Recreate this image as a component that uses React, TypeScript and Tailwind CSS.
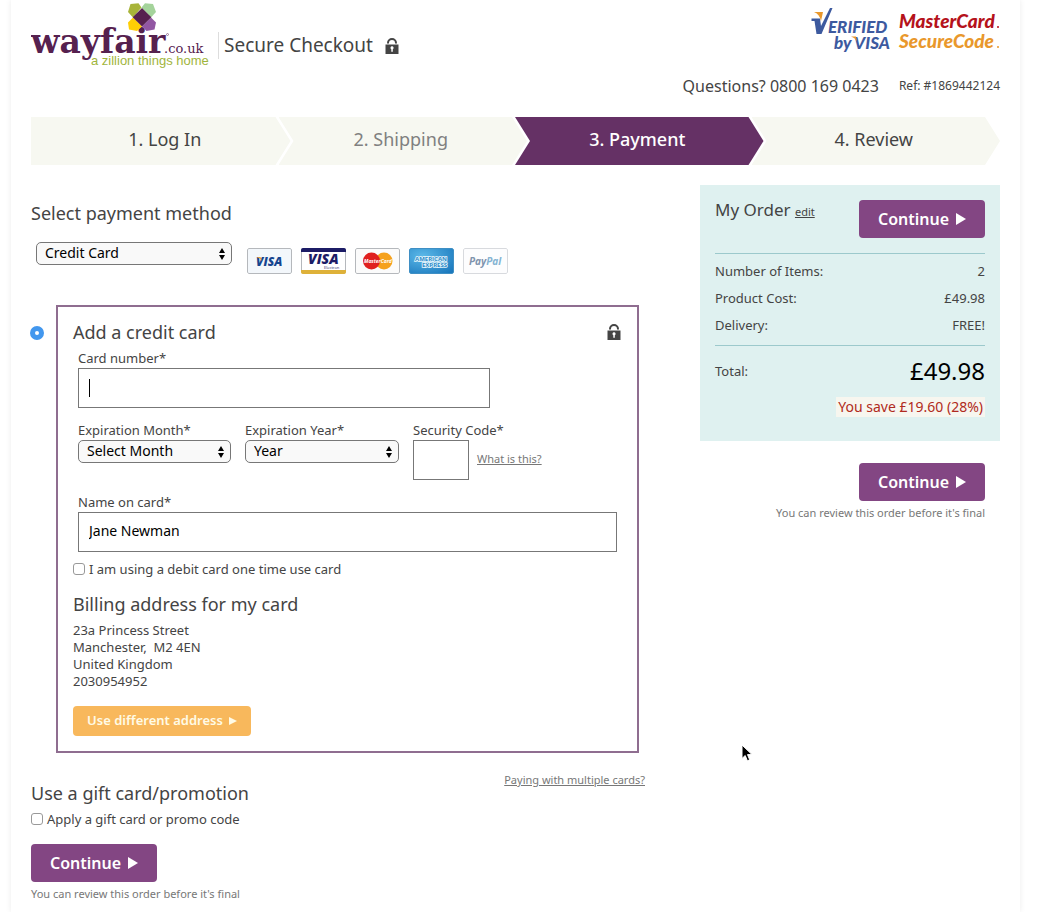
import type { ReactNode } from 'react';
import clsx from 'clsx';

// ============================================================
// Icons and logos
// ============================================================

function LockIcon({ className }: { className?: string }) {
  return (
    <svg viewBox="0 0 14 16" className={clsx('w-3.5 h-4 flex-shrink-0', className)} aria-hidden="true">
      <path d="M3 5.500V5a4 4 0 0 1 8 0v.5" fill="none" stroke="#444" strokeWidth="2" />
      <path fill="#444" d="M.5 6.500h13V16H.5z" />
      <path fill="#fff" d="M7 8.200a1.600 1.600 0 0 1 .8 3v2.600H6.300v-2.600A1.600 1.600 0 0 1 7 8.200z" />
    </svg>
  );
}

function WayfairLogo() {
  return (
    <svg viewBox="0 0 180 72" className="w-[180px] h-[72px] flex-shrink-0" role="img" aria-label="Wayfair.co.uk">
      <text x="0" y="53" fill="#56214f" fontFamily="'DejaVu Serif', serif" fontWeight="700" fontSize="33">
        wayfair
      </text>
      <path fill="#a8b43a" d="M110.500 7.500 107.500 3.300 99.500 4 97 12 102 17.500z" />
      <path fill="#a4d39b" d="M110.500 7.500 114 3.300 122 4 125 12 120 17.500z" />
      <path fill="#ffcf05" d="M102 17.500 97 22.500 98 29.500 106 31 111 26.500z" />
      <path fill="#9257a3" d="M120 17.500 125 22.500 123.500 29.500 115.500 31 111 26.500z" />
      <path fill="#56214f" d="M111 8 120.300 17.300 111 26.600 101.700 17.300z" />
      <text x="133" y="53" fill="#56214f" fontFamily="'DejaVu Serif', serif" fontSize="13">
        .co.uk
      </text>
      <text x="60" y="65" fill="#9fb53c" fontFamily="'Liberation Sans', sans-serif" fontSize="13">
        a zillion things home
      </text>
      <circle cx="136.500" cy="34.500" r="1" fill="none" stroke="#56214f" strokeWidth=".5" />
    </svg>
  );
}

function SecurityLogos() {
  return (
    <svg viewBox="0 0 190 44" className="w-[190px] h-11" role="img" aria-label="Verified by Visa, MasterCard SecureCode">
      <g fontFamily="Lato, sans-serif" fontWeight="900" fontStyle="italic">
        <path fill="#e9982c" d="M4 4H13L11 13Q9.500 6 4 4z" />
        <path fill="#3d5a9f" d="M1.500 10.500H10L11 18 20 0H22.500L11.500 26H6.500L4.500 13H1.500z" />
        <text x="18" y="25" fill="#3d5a9f" fontSize="17">ERIFIED</text>
        <text x="24" y="41" fill="#3d5a9f" fontSize="17">by VISA</text>
        <path fill="#e9982c" d="M41 28.500h5l1 5Q45.500 30 41 28.500z" />
        <text x="89" y="20" fill="#b5121b" fontSize="19">MasterCard</text>
        <text x="89" y="40" fill="#e9982c" fontSize="19">SecureCode</text>
        <circle cx="188" cy="19" r="1" fill="#b5121b" />
        <circle cx="188" cy="39" r="1" fill="#e9982c" />
      </g>
    </svg>
  );
}

function CardLogos() {
  const sans = "'Open Sans', sans-serif";
  const frame = 'w-[45px] h-[26px] rounded-xs';
  return (
    <div className="flex gap-[9px] mt-1.5">
      <svg viewBox="0 0 45 26" className={frame} role="img" aria-label="Visa">
        <rect x=".5" y=".5" width="44" height="25" rx="1.500" fill="#f3f7fb" stroke="#b5b8bc" />
        <text x="9" y="18" fill="#16458f" fontFamily={sans} fontWeight="800" fontStyle="italic" fontSize="12">VISA</text>
        <path fill="#eaa53a" d="M9.500 9h4l1.500 4Q13 10 9.500 9z" />
      </svg>
      <svg viewBox="0 0 45 26" className={frame} role="img" aria-label="Visa Electron">
        <rect x=".5" y=".5" width="44" height="25" rx="1.500" fill="#fff" stroke="#b5b8bc" />
        <path fill="#1c1c66" d="M0 0h45v4H0z" />
        <path fill="#deb139" d="M0 22h45v4H0z" />
        <text x="7" y="16" fill="#1c1c66" fontFamily={sans} fontWeight="800" fontStyle="italic" fontSize="14">VISA</text>
        <text x="23" y="21" fill="#1c1c66" fontFamily={sans} fontSize="4">Electron</text>
      </svg>
      <svg viewBox="0 0 45 26" className={frame} role="img" aria-label="MasterCard">
        <rect x=".5" y=".5" width="44" height="25" rx="1.500" fill="#fbfbfb" stroke="#b5b8bc" />
        <circle cx="29" cy="13" r="8.500" fill="#f5a11c" />
        <circle cx="16.500" cy="13" r="8.500" fill="#e0201f" />
        <text x="9" y="15" fill="#fff" fontFamily={sans} fontWeight="700" fontStyle="italic" fontSize="5">MasterCard</text>
      </svg>
      <svg viewBox="0 0 45 26" className={frame} role="img" aria-label="American Express">
        <defs>
          <radialGradient id="amex" cx=".3" cy=".3" r=".9">
            <stop offset="0" stopColor="#5bb8e8" />
            <stop offset="1" stopColor="#1a78bd" />
          </radialGradient>
        </defs>
        <rect x=".5" y=".5" width="44" height="25" rx="1.500" fill="url(#amex)" stroke="#3f8fc4" />
        <g fill="#2b8bc9" stroke="#e6f5fc" strokeWidth="1.600" paintOrder="stroke" fontFamily={sans} fontWeight="700" fontSize="6">
          <text x="6" y="13">AMERICAN</text>
          <text x="13" y="19">EXPRESS</text>
        </g>
      </svg>
      <svg viewBox="0 0 45 26" className={frame} role="img" aria-label="PayPal">
        <rect x=".5" y=".5" width="44" height="25" rx="1.500" fill="#fdfdfe" stroke="#d8dade" />
        <g fontFamily={sans} fontWeight="700" fontStyle="italic" fontSize="10">
          <text x="6" y="17" fill="#7f93ad">Pay<tspan fill="#84b3d2">Pal</tspan></text>
        </g>
      </svg>
    </div>
  );
}

// ============================================================
// Form pieces
// ============================================================

interface SelectProps {
  id: string;
  options: string[];
  label?: string;
  className?: string;
}

function Select({ id, options, label, className }: SelectProps) {
  return (
    <div className={clsx('relative', className)}>
      <select
        id={id}
        aria-label={label}
        className="block w-full h-[23px] appearance-none rounded-[5px] border border-[#777] bg-[#f9f9f9] pl-2 pr-5 pb-1 text-sm leading-5 text-black"
      >
        {options.map((option) => (
          <option key={option}>{option}</option>
        ))}
      </select>
      <svg viewBox="0 0 6 12" className="absolute right-[7px] top-[6px] w-1.5 h-3 pointer-events-none" aria-hidden="true">
        <path d="M3 0 6 5H0zM3 12 0 7h6z" />
      </svg>
    </div>
  );
}

function Field({ id, label, children }: { id: string; label: string; children: ReactNode }) {
  return (
    <div>
      <label htmlFor={id} className="block leading-5">{label}</label>
      {children}
    </div>
  );
}

function Checkbox({ id, label, className }: { id: string; label: string; className?: string }) {
  return (
    <div className={clsx('flex items-center gap-1', className)}>
      <input id={id} type="checkbox" className="w-3 h-3 appearance-none rounded-[3px] border border-[#999] bg-white" />
      <label htmlFor={id} className="leading-5">{label}</label>
    </div>
  );
}

function ContinueButton({ className }: { className?: string }) {
  return (
    <button
      type="button"
      className={clsx(
        'flex items-center justify-center gap-[7px] w-[126px] h-[38px] rounded bg-[#834683] text-base font-semibold text-white',
        className,
      )}
    >
      Continue
      <svg viewBox="0 0 10 12" className="w-2.5 h-3" aria-hidden="true">
        <path d="M0 0 10 6 0 12z" fill="#fff" />
      </svg>
    </button>
  );
}

// ============================================================
// Page sections
// ============================================================

const STEPS = [
  { label: '1. Log In', look: 'bg-[#f7f8f1] text-[#444]' },
  { label: '2. Shipping', look: 'bg-[#f7f8f1] text-[#808080]' },
  { label: '3. Payment', look: 'bg-[#653165] text-white font-medium' },
  { label: '4. Review', look: 'bg-[#f7f8f1] text-[#444]' },
];

function Steps() {
  return (
    <ol className="flex mt-[21px]">
      {STEPS.map((step, i) => (
        <li
          key={step.label}
          className={clsx(
            'flex-1 h-12 pb-1 flex items-center justify-center text-lg',
            step.look,
            i === 0
              ? 'basis-[15px] pl-2 [clip-path:polygon(0_0,calc(100%-15px)_0,100%_50%,calc(100%-15px)_100%,0_100%)]'
              : 'basis-0 -ml-3 pr-1 [clip-path:polygon(0_0,calc(100%-15px)_0,100%_50%,calc(100%-15px)_100%,0_100%,15px_50%)]',
          )}
        >
          {step.label}
        </li>
      ))}
    </ol>
  );
}

function CreditCardPanel() {
  return (
    <div className="flex gap-3 mt-[31px] -ml-px mr-1.5">
      <input
        type="radio"
        name="card"
        defaultChecked
        aria-label="Add a credit card"
        className="mt-[21px] w-3.5 h-3.5 flex-shrink-0 appearance-none rounded-full border-[5px] border-[#4297ee] bg-white"
      />
      <div className="flex-1 border-2 border-[#8f6d90] px-[15px] pt-[13px] pb-[15px]">
        <div className="flex items-center justify-between">
          <h2 className="text-lg leading-6">Add a credit card</h2>
          <LockIcon className="mr-px" />
        </div>

        <div className="mt-1 px-[5px] flex flex-col gap-3">
          <Field id="card-number" label="Card number*">
            <div className="relative w-[412px]">
              <input id="card-number" className="block w-full h-10 border border-[#777] px-2.5 text-sm text-black" />
              <span className="absolute left-[11px] top-[11px] h-[18px] w-px bg-black" />
            </div>
          </Field>

          <div className="flex gap-3.5">
            <Field id="month" label="Expiration Month*">
              <Select id="month" options={['Select Month']} className="w-[153px]" />
            </Field>
            <Field id="year" label="Expiration Year*">
              <Select id="year" options={['Year']} className="w-[154px]" />
            </Field>
            <Field id="security-code" label="Security Code*">
              <div className="flex items-center gap-2">
                <input id="security-code" className="w-14 h-10 border border-[#777] px-2 text-sm text-black" />
                <a href="#security" className="pb-0.5 text-[11px] text-[#777] underline">What is this?</a>
              </div>
            </Field>
          </div>

          <Field id="card-name" label="Name on card*">
            <input
              id="card-name"
              defaultValue="Jane Newman"
              className="block w-full h-10 border border-[#777] px-2.5 pb-1 text-sm text-black"
            />
          </Field>
        </div>

        <Checkbox id="debit" label="I am using a debit card one time use card" className="mt-[7px]" />

        <h2 className="mt-[13px] text-lg leading-6">Billing address for my card</h2>
        <address className="mt-1.5 not-italic leading-[17px] whitespace-pre-line">
          {'23a Princess Street\nManchester, \u00a0M2 4EN\nUnited Kingdom\n2030954952'}
        </address>
        <button
          type="button"
          className="mt-4 flex items-center justify-center gap-1.5 w-[178px] h-[30px] rounded bg-[#f8b85c] font-semibold text-[#fffbe6]"
        >
          Use different address
          <svg viewBox="0 0 8 8" className="w-2 h-2" aria-hidden="true">
            <path d="M0 0 8 4 0 8z" fill="#fffbe6" />
          </svg>
        </button>
      </div>
    </div>
  );
}

const ORDER_LINES = [
  ['Number of Items:', '2'],
  ['Product Cost:', '£49.98'],
  ['Delivery:', 'FREE!'],
];

function OrderSummary() {
  return (
    <aside className="w-[300px] flex-shrink-0">
      <section className="bg-[#dff1f0] px-[15px] pt-[15px] pb-6">
        <div className="flex items-start justify-between">
          <h2 className="text-[17px] leading-5">
            My Order <a href="#edit" className="text-[11px] underline">edit</a>
          </h2>
          <ContinueButton />
        </div>
        <dl className="mt-[15px] border-y border-[#9cc9cc] pt-1 pb-1.5">
          {ORDER_LINES.map(([name, value]) => (
            <div key={name} className="flex justify-between leading-[27px]">
              <dt>{name}</dt>
              <dd>{value}</dd>
            </div>
          ))}
        </dl>
        <div className="mt-[9px] flex items-center justify-between leading-8">
          <span>Total:</span>
          <span className="text-2xl text-black">£49.98</span>
        </div>
        <p className="mt-2.5 ml-auto w-fit bg-[#f7f6ef] px-0.5 text-sm leading-5 text-[#b02a20]">You save £19.60 (28%)</p>
      </section>
      <div className="mt-[22px] mr-[15px] flex flex-col items-end">
        <ContinueButton />
        <p className="mt-0.5 text-[11px] leading-5 text-[#777]">You can review this order before it's final</p>
      </div>
    </aside>
  );
}

export default function App() {
  return (
    <div className="relative min-h-screen overflow-hidden bg-white pl-[11px] pr-5 font-['Noto_Sans',sans-serif] text-[13px] text-[#444]">
      <div className="min-h-screen px-5 pb-2 shadow-[0_0_6px_rgba(0,0,0,0.08)]">
        <header className="flex items-start justify-between">
          <div className="flex items-start">
            <WayfairLogo />
            <div className="ml-[7px] mt-8 h-[27px] flex items-center gap-3 border-l border-[#ddd] pl-[5px]">
              <h1 className="text-[19px]">Secure Checkout</h1>
              <LockIcon />
            </div>
          </div>
          <div className="pt-2 flex flex-col items-end">
            <SecurityLogos />
            <p className="mt-6 flex items-center gap-5 leading-5">
              <span className="text-base leading-5">Questions? 0800 169 0423</span>
              <span className="text-xs leading-5">Ref: #1869442124</span>
            </p>
          </div>
        </header>

        <Steps />

        <div className="mt-5 flex items-start justify-between gap-[55px]">
          <main className="flex-1 pt-4">
            <h2 className="text-lg leading-6">Select payment method</h2>
            <div className="mt-[17px] ml-[5px] flex items-start gap-[15px]">
              <Select id="method" label="Payment method" options={['Credit Card']} className="w-[196px]" />
              <CardLogos />
            </div>

            <CreditCardPanel />

            <div className="mt-[17px] flex items-start justify-between">
              <h2 className="pt-[11px] text-lg leading-6">Use a gift card/promotion</h2>
              <a href="#multiple" className="text-[11px] leading-5 text-[#777] underline">Paying with multiple cards?</a>
            </div>
            <Checkbox id="promo" label="Apply a gift card or promo code" className="mt-1" />
            <ContinueButton className="mt-[15px]" />
            <p className="mt-0.5 text-[11px] leading-5 text-[#777]">You can review this order before it's final</p>
          </main>
          <OrderSummary />
        </div>
      </div>

      {/* mouse pointer */}
      <svg viewBox="0 0 12 18" className="absolute left-[741px] top-[744px] w-3 h-[18px] pointer-events-none" aria-hidden="true">
        <path d="M1 1v13.500l3.200-3 2.200 5.300 2.300-1-2.200-5.200H11z" stroke="#fff" strokeWidth="1" />
      </svg>
    </div>
  );
}
